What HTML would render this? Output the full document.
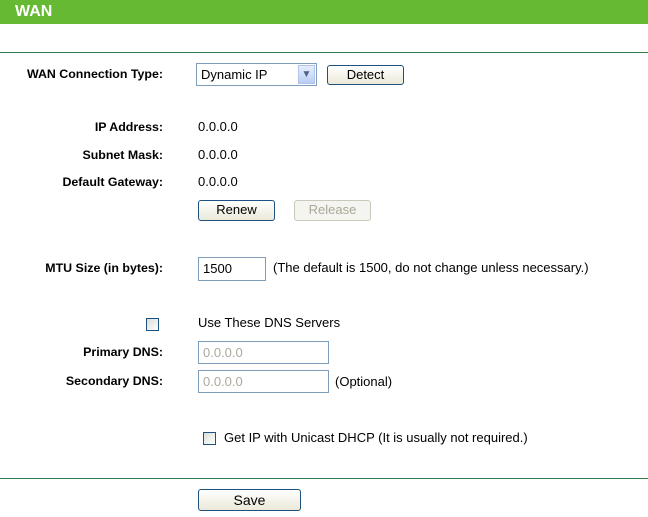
<!DOCTYPE html>
<html><head><style>
body{margin:0;width:648px;height:517px;background:#fff;font-family:"Liberation Sans",Arial,sans-serif;font-size:13px;color:#000;position:relative;overflow:hidden}
.a{position:absolute;white-space:nowrap}
.l{position:absolute;right:485px;font-weight:bold;font-size:12.4px;white-space:nowrap}
.btn{position:absolute;border:1px solid #1c5180;border-radius:3px;background:linear-gradient(#fff,#ece9d8);text-align:center;box-sizing:border-box;font-size:13px;line-height:17px}
.inp{position:absolute;border:1px solid #7f9db9;box-sizing:border-box;background:#fff;font-size:13px;padding-left:4px}
.cb{position:absolute;width:13px;height:13px;border:1px solid #1c5180;box-sizing:border-box;background:linear-gradient(135deg,#dcdcd7,#fff)}
.line{position:absolute;left:0;width:648px;height:1px;background:#2c7d4c}
</style></head><body>
<div class="a" style="left:0;top:0;width:648px;height:24px;background:#66b933"></div>
<div class="a" style="left:15px;top:3px;color:#fff;font-weight:bold;font-size:16px">WAN</div>
<div class="line" style="top:52px"></div>

<div class="l" style="top:67px">WAN Connection Type:</div>
<div class="inp" style="left:196px;top:63px;width:121px;height:23px;line-height:21px">Dynamic IP</div>
<div class="a" style="left:298px;top:65px;width:17px;height:19px;background:linear-gradient(#e6eefc,#b9cdf4);border:1px solid #b0c4ee;box-sizing:border-box;color:#4d6185;font-size:10px;text-align:center;line-height:17px">&#9660;</div>
<div class="btn" style="left:327px;top:65px;width:77px;height:20px">Detect</div>

<div class="l" style="top:120px">IP Address:</div><div class="a" style="left:198px;top:119px">0.0.0.0</div>
<div class="l" style="top:148px">Subnet Mask:</div><div class="a" style="left:198px;top:147px">0.0.0.0</div>
<div class="l" style="top:175px">Default Gateway:</div><div class="a" style="left:198px;top:174px">0.0.0.0</div>
<div class="btn" style="left:198px;top:200px;width:77px;height:21px">Renew</div>
<div class="btn" style="left:294px;top:200px;width:77px;height:21px;border-color:#cac8bb;color:#aca899;background:#f4f4f0">Release</div>

<div class="l" style="top:261px">MTU Size (in bytes):</div>
<div class="inp" style="left:198px;top:257px;width:68px;height:24px;line-height:22px">1500</div>
<div class="a" style="left:273px;top:260px">(The default is 1500, do not change unless necessary.)</div>

<div class="cb" style="left:146px;top:318px"></div>
<div class="a" style="left:198px;top:315px">Use These DNS Servers</div>
<div class="l" style="top:345px">Primary DNS:</div>
<div class="inp" style="left:198px;top:341px;width:131px;height:23px;line-height:21px;color:#aca899">0.0.0.0</div>
<div class="l" style="top:374px">Secondary DNS:</div>
<div class="inp" style="left:198px;top:370px;width:131px;height:23px;line-height:21px;color:#aca899">0.0.0.0</div>
<div class="a" style="left:335px;top:374px">(Optional)</div>

<div class="cb" style="left:203px;top:432px"></div>
<div class="a" style="left:224px;top:430px">Get IP with Unicast DHCP (It is usually not required.)</div>

<div class="line" style="top:478px"></div>
<div class="btn" style="left:198px;top:489px;width:103px;height:22px;line-height:20px;font-size:14px">Save</div>
</body></html>
